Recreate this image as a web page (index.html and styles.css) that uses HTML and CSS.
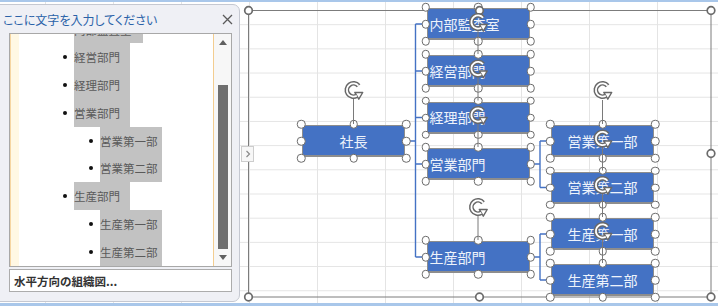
FILE: index.html
```html
<!DOCTYPE html>
<html lang="ja">
<head>
<meta charset="utf-8">
<title>SmartArt 組織図</title>
<link rel="stylesheet" href="styles.css">
</head>
<body>
<div class="app">
  <div class="sheet">
    <svg class="layer" width="718" height="306" viewBox="0 0 718 306">
      <rect class="frame" x="248.5" y="10.5" width="462.5" height="286.5"/>
      <path class="conn" d="M406 141H415.5M415.5 24V257M415.5 24H426M415.5 71H426M415.5 117.5H426M415.5 164H426M415.5 257H426M530 164H540M540 141V187.5M540 141H550M540 187.5H550M530 257H540M540 234V280M540 234H550M540 280H550"/>
    </svg>

    <div class="node n-shacho"><div class="shape center">社長</div><span class="h t l"></span><span class="h t c"></span><span class="h t r"></span><span class="h m l"></span><span class="h m r"></span><span class="h b l"></span><span class="h b c"></span><span class="h b r"></span></div>
    <div class="node mid n-naibu"><div class="shape left">内部監査室</div><span class="h t l"></span><span class="h t c"></span><span class="h t r"></span><span class="h m l"></span><span class="h m r"></span><span class="h b l"></span><span class="h b c"></span><span class="h b r"></span></div>
    <div class="node mid n-keiei"><div class="shape left">経営部門</div><span class="h t l"></span><span class="h t c"></span><span class="h t r"></span><span class="h m l"></span><span class="h m r"></span><span class="h b l"></span><span class="h b c"></span><span class="h b r"></span></div>
    <div class="node mid n-keiri"><div class="shape left">経理部門</div><span class="h t l"></span><span class="h t c"></span><span class="h t r"></span><span class="h m l"></span><span class="h m r"></span><span class="h b l"></span><span class="h b c"></span><span class="h b r"></span></div>
    <div class="node mid n-eigyo"><div class="shape left">営業部門</div><span class="h t l"></span><span class="h t c"></span><span class="h t r"></span><span class="h m l"></span><span class="h m r"></span><span class="h b l"></span><span class="h b c"></span><span class="h b r"></span></div>
    <div class="node mid n-seisan"><div class="shape left">生産部門</div><span class="h t l"></span><span class="h t c"></span><span class="h t r"></span><span class="h m l"></span><span class="h m r"></span><span class="h b l"></span><span class="h b c"></span><span class="h b r"></span></div>
    <div class="node right n-e1"><div class="shape center">営業第一部</div><span class="h t l"></span><span class="h t c"></span><span class="h t r"></span><span class="h m l"></span><span class="h m r"></span><span class="h b l"></span><span class="h b c"></span><span class="h b r"></span></div>
    <div class="node right n-e2"><div class="shape center">営業第二部</div><span class="h t l"></span><span class="h t c"></span><span class="h t r"></span><span class="h m l"></span><span class="h m r"></span><span class="h b l"></span><span class="h b c"></span><span class="h b r"></span></div>
    <div class="node right n-s1"><div class="shape center">生産第一部</div><span class="h t l"></span><span class="h t c"></span><span class="h t r"></span><span class="h m l"></span><span class="h m r"></span><span class="h b l"></span><span class="h b c"></span><span class="h b r"></span></div>
    <div class="node right n-s2"><div class="shape center">生産第二部</div><span class="h t l"></span><span class="h t c"></span><span class="h t r"></span><span class="h m l"></span><span class="h m r"></span><span class="h b l"></span><span class="h b c"></span><span class="h b r"></span></div>

    <svg class="layer" width="718" height="306" viewBox="0 0 718 306">
      <defs>
        <symbol id="rot" viewBox="-10 -9 22 18" overflow="visible">
          <path d="M5.05 -4.24A6.6 6.6 0 1 0 3.3 5.72" fill="none" stroke="#686868" stroke-width="4.8"/>
          <polygon points="9.2,2.5 5.3,9.2 1.3,2.4" fill="#fff" stroke="#686868" stroke-width="1.4" stroke-linejoin="round"/>
          <path d="M5.05 -4.24A6.6 6.6 0 1 0 3.3 5.72" fill="none" stroke="#fff" stroke-width="1.8"/>
        </symbol>
      </defs>
      <path class="stem" d="M353.5 98V124M478 30V54M478 76.5V100.5M478 123V147M478 216V240M602.5 100V124M602.5 146.5V170.5M602.5 193V217M602.5 239V263"/>
      <g class="fh">
        <circle cx="248.5" cy="10.5" r="3.8"/>
        <circle cx="479.5" cy="10.5" r="3.8"/>
        <circle cx="711" cy="10.5" r="3.8"/>
        <circle cx="711" cy="153.5" r="3.8"/>
        <circle cx="248.5" cy="297" r="3.8"/>
        <circle cx="479.5" cy="297" r="3.8"/>
        <circle cx="711" cy="297" r="3.8"/>
      </g>
      <use href="#rot" x="343.5" y="81" width="22" height="18"/>
      <use href="#rot" x="468" y="13" width="22" height="18"/>
      <use href="#rot" x="468" y="59.5" width="22" height="18"/>
      <use href="#rot" x="468" y="106" width="22" height="18"/>
      <use href="#rot" x="468" y="198" width="22" height="18"/>
      <use href="#rot" x="592.5" y="81" width="22" height="18"/>
      <use href="#rot" x="592.5" y="129.5" width="22" height="18"/>
      <use href="#rot" x="592.5" y="176" width="22" height="18"/>
      <use href="#rot" x="592.5" y="222" width="22" height="18"/>
    </svg>

    <div class="expand-tab">
      <svg width="6" height="8" viewBox="0 0 6 8"><polyline points="1.5,1 4.5,4 1.5,7" fill="none" stroke="#8a8a8a" stroke-width="1.2"/></svg>
    </div>
  </div>

  <aside class="pane">
    <div class="pane-head">
      <span class="pane-title">ここに文字を入力してください</span>
      <svg class="pane-close" width="11" height="11" viewBox="0 0 11 11"><path d="M1 1L10 10M10 1L1 10" stroke="#5a5a5a" stroke-width="1.3"/></svg>
    </div>
    <div class="pane-body">
      <div class="text-region">
        <ul class="outline">
          <li class="lv1"><span class="sel w-first">内部監査室</span></li>
          <li class="lv1"><span class="sel w-1">経営部門</span></li>
          <li class="lv1"><span class="sel w-1">経理部門</span></li>
          <li class="lv1"><span class="sel w-1">営業部門</span></li>
          <li class="lv2"><span class="sel w-2">営業第一部</span></li>
          <li class="lv2"><span class="sel w-2">営業第二部</span></li>
          <li class="lv1"><span class="sel w-1">生産部門</span></li>
          <li class="lv2"><span class="sel w-2">生産第一部</span></li>
          <li class="lv2"><span class="sel w-2">生産第二部</span></li>
        </ul>
      </div>
      <div class="scrollbar">
        <div class="sb-btn"><svg width="8" height="5" viewBox="0 0 8 5"><polygon points="4,0 8,5 0,5" fill="#606060"/></svg></div>
        <div class="sb-track"><div class="sb-thumb"></div></div>
        <div class="sb-btn"><svg width="8" height="5" viewBox="0 0 8 5"><polygon points="0,0 8,0 4,5" fill="#606060"/></svg></div>
      </div>
    </div>
    <div class="pane-foot">水平方向の組織図...</div>
  </aside>
</div>
</body>
</html>
```

FILE: styles.css
```css
html, body {
  margin: 0;
  padding: 0;
  background: #fff;
}

.app {
  position: relative;
  width: 718px;
  height: 306px;
  overflow: hidden;
  font-family: "Noto Sans CJK JP", "Noto Sans", sans-serif;
  background-color: #fff;
  background-image:
    linear-gradient(to right, #e4e4e4 1px, transparent 1px),
    linear-gradient(to bottom, #e4e4e4 1px, transparent 1px);
  background-size: 68px 100%, 100% 24.2px;
  background-position: 45px 0, 0 0;
}

.app::before,
.app::after {
  content: "";
  position: absolute;
  left: 0;
  right: 0;
  z-index: 10;
  background: #a9c7ea;
}
.app::before { top: 0; height: 2px; }
.app::after { bottom: 0; height: 3px; }

/* ---------- diagram canvas ---------- */
.sheet {
  position: absolute;
  inset: 0;
}

.layer {
  position: absolute;
  left: 0;
  top: 0;
  overflow: visible;
}

.frame {
  fill: none;
  stroke: #7c7c7c;
  stroke-width: 1;
}

.conn {
  fill: none;
  stroke: #4472c4;
  stroke-width: 1.4;
}

.stem {
  fill: none;
  stroke: #7a7a7a;
  stroke-width: 1;
}

.fh circle {
  fill: #fff;
  stroke: #6b6b6b;
  stroke-width: 1.7;
}

.node {
  position: absolute;
  width: 105px;
  height: 34px;
}

.n-shacho { left: 301px; top: 124px; }
.n-naibu  { left: 425.5px; top: 7px; }
.n-keiei  { left: 425.5px; top: 54px; }
.n-keiri  { left: 425.5px; top: 100.5px; }
.n-eigyo  { left: 425.5px; top: 147px; }
.n-seisan { left: 425.5px; top: 240px; }
.n-e1     { left: 550px; top: 124px; }
.n-e2     { left: 550px; top: 170.5px; }
.n-s1     { left: 550px; top: 217px; }
.n-s2     { left: 550px; top: 263px; }

.shape {
  position: absolute;
  inset: 1px;
  box-sizing: border-box;
  background: #4472c4;
  border: 1.5px solid #8d8d8d;
  border-bottom-width: 2px;
  display: flex;
  align-items: center;
  color: #eef3fb;
  font-size: 14px;
  line-height: 1;
  white-space: nowrap;
  overflow: hidden;
}
.shape.left { padding-left: 2px; }
.shape.center { justify-content: center; }

.h {
  position: absolute;
  width: 8.5px;
  height: 8.5px;
  box-sizing: border-box;
  border-radius: 50%;
  background: #fff;
  border: 1.7px solid #6b6b6b;
  transform: translate(-50%, -50%);
}
.h.l { left: 0; }
.h.c { left: 50%; }
.h.r { left: 100%; }
.h.t { top: 0; }
.h.m { top: 50%; }
.h.b { top: 100%; }

.expand-tab {
  position: absolute;
  left: 241px;
  top: 146px;
  width: 13px;
  height: 16px;
  box-sizing: border-box;
  background: #f7f7f7;
  border: 1px solid #cdcdcd;
  display: flex;
  align-items: center;
  justify-content: center;
}
.expand-tab svg { display: block; }

/* ---------- text pane ---------- */
.pane {
  position: absolute;
  left: -1px;
  top: 4px;
  width: 241px;
  height: 298px;
  box-sizing: border-box;
  background: #eff0f5;
  border: 1px solid #c5c8d1;
  border-radius: 0 7px 7px 0;
  padding: 0 7px 9px 9px;
  display: flex;
  flex-direction: column;
  z-index: 5;
}

.pane-head {
  height: 28px;
  flex: none;
  display: flex;
  align-items: center;
  justify-content: space-between;
  margin-left: -6px;
  margin-right: -1px;
}

.pane-title {
  font-size: 12px;
  color: #2a62a8;
  font-feature-settings: "palt" 1;
  white-space: nowrap;
  padding-top: 1px;
}

.pane-close {
  display: block;
  margin-right: 0;
}

.pane-body {
  height: 234px;
  flex: none;
  box-sizing: border-box;
  border: 1px solid #a8a8a8;
  background: #fff;
  display: flex;
}

.text-region {
  flex: 1;
  min-width: 0;
  border-left: 1px solid #f6d6a2;
  border-right: 1px solid #f3cd90;
  background: linear-gradient(90deg, #fff8e4 8px, #fff 8px);
  overflow: hidden;
}

.outline {
  list-style: none;
  margin: -18.5px 0 0;
  padding: 0;
}

.outline li {
  height: 27.8px;
  display: flex;
  align-items: center;
}
.outline li.lv1 { padding-left: 63px; }
.outline li.lv2 { padding-left: 89px; }

.outline li::before {
  content: "";
  flex: none;
  width: 4px;
  height: 4px;
  border-radius: 50%;
  background: #111;
  margin-left: -11.5px;
  margin-right: 7.5px;
}

.sel {
  display: block;
  height: 100%;
  box-sizing: border-box;
  padding-top: 2px;
  line-height: 25.8px;
  background: #c2c2c2;
  color: #5a5a5a;
  font-size: 11.5px;
  white-space: nowrap;
}
.w-first { width: 69px; }
.w-1 { width: 55.5px; }
.w-2 { width: 62px; }

.scrollbar {
  width: 17px;
  flex: none;
  background: #f7f7f7;
  display: flex;
  flex-direction: column;
}

.sb-btn {
  height: 17px;
  flex: none;
  display: flex;
  align-items: center;
  justify-content: center;
  padding-left: 1px;
}
.sb-btn svg { display: block; }

.sb-track {
  flex: 1;
  display: flex;
  flex-direction: column;
}

.sb-thumb {
  flex: 1;
  margin: 34px 3px 0 4px;
  background: #6f6f6f;
}

.pane-foot {
  margin-top: 2px;
  height: 23px;
  flex: none;
  box-sizing: border-box;
  border: 1px solid #acacac;
  background: #fff;
  display: flex;
  align-items: center;
  padding-left: 4px;
  font-size: 11.5px;
  font-weight: bold;
  color: #333;
  white-space: nowrap;
}
```
